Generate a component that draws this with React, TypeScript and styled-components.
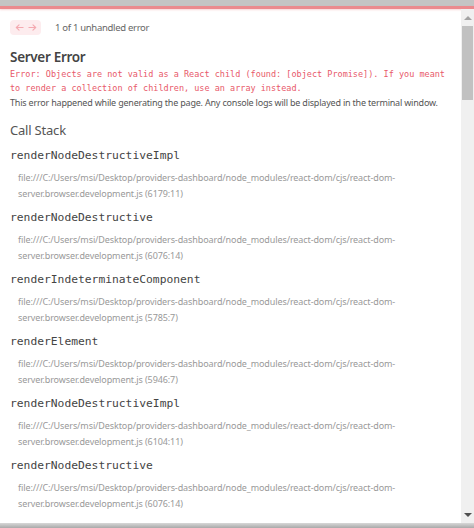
import styled, { createGlobalStyle } from 'styled-components';

const GlobalStyle = createGlobalStyle`
  html, body {
    margin: 0;
    padding: 0;
    background: #ffffff;
  }
  body {
    font-family: "Noto Sans", "Open Sans", sans-serif;
  }
`;

type Frame = {
  name: string
  file: string
  loc: string
};

const FILE_PATH = 'file:///C:/Users/msi/Desktop/providers-dashboard/node_modules/react-dom/cjs/react-dom-';

const frames: Frame[] = [
  { name: 'renderNodeDestructiveImpl', file: FILE_PATH, loc: '(6179:11)' },
  { name: 'renderNodeDestructive', file: FILE_PATH, loc: '(6076:14)' },
  { name: 'renderIndeterminateComponent', file: FILE_PATH, loc: '(5785:7)' },
  { name: 'renderElement', file: FILE_PATH, loc: '(5946:7)' },
  { name: 'renderNodeDestructiveImpl', file: FILE_PATH, loc: '(6104:11)' },
  { name: 'renderNodeDestructive', file: FILE_PATH, loc: '(6076:14)' },
];

const Arrow = ({ dir }: { dir: 'left' | 'right' }) => (
  <svg width="9" height="9" viewBox="0 0 10 10" fill="none" stroke="currentColor" strokeWidth="1.2" strokeLinecap="round" strokeLinejoin="round">
    {dir === 'left' ? (
      <>
        <path d="M9 5H1.5" />
        <path d="M4.5 2L1.5 5L4.5 8" />
      </>
    ) : (
      <>
        <path d="M1 5H8.5" />
        <path d="M5.5 2L8.5 5L5.5 8" />
      </>
    )}
  </svg>
);

export default function App() {
  return (
    <>
      <GlobalStyle />
      <Window>
        <TopShade />
        <RedLine />
        <Body>
          <Content>
            <Nav>
              <NavButtons>
                <Arrow dir="left" />
                <Arrow dir="right" />
              </NavButtons>
              <NavText>1 of 1 unhandled error</NavText>
            </Nav>
            <Title>Server Error</Title>
            <ErrorMessage>
              Error: Objects are not valid as a React child (found: [object Promise]). If you meant{'\n'}to render a collection of children, use an array instead.
            </ErrorMessage>
            <Note>This error happened while generating the page. Any console logs will be displayed in the terminal window.</Note>
            <StackTitle>Call Stack</StackTitle>
            {frames.map((f, i) => (
              <StackFrame key={i}>
                <FnName>{f.name}</FnName>
                <FileLine>
                  {f.file}
                  <br />
                  server.browser.development.js {f.loc}
                </FileLine>
              </StackFrame>
            ))}
          </Content>
          <Scrollbar>
            <ScrollArrow $up />
            <Track>
              <Thumb />
            </Track>
            <ScrollArrow />
          </Scrollbar>
        </Body>
        <BottomShade />
      </Window>
    </>
  );
}

const Window = styled.div`
  height: 528px;
  display: flex;
  flex-direction: column;
  overflow: hidden;
`

const TopShade = styled.div`
  height: 6px;
  background: #c4c4c4;
`

const RedLine = styled.div`
  height: 3px;
  background: #eb8a8e;
  box-shadow: 0 1px 2px rgba(235, 90, 100, 0.25);
`

const BottomShade = styled.div`
  height: 5px;
  background: linear-gradient(#d8d8d8, #a9a9a9);
`

const Body = styled.div`
  flex: 1;
  display: flex;
  min-height: 0;
`

const Content = styled.div`
  flex: 1;
  padding: 11px 0 0 10px;
  overflow: hidden;
`

const Nav = styled.div`
  display: flex;
  align-items: center;
  height: 15px;
`

const NavButtons = styled.div`
  width: 31px;
  height: 15px;
  border-radius: 4px;
  background: #fdecee;
  color: #f4a9b0;
  display: flex;
  align-items: center;
  justify-content: center;
  gap: 4px;
`

const NavText = styled.span`
  margin-left: 14px;
  font-size: 9.5px;
  letter-spacing: -0.3px;
  color: #666;
`

const Title = styled.h1`
  margin: 12px 0 0;
  font-size: 13.5px;
  letter-spacing: -0.3px;
  line-height: 20px;
  font-weight: 600;
  color: #444;
`

const ErrorMessage = styled.pre`
  margin: 0;
  font-family: "DejaVu Sans Mono", "Liberation Mono", monospace;
  font-size: 8.5px;
  line-height: 14px;
  color: #e8596a;
  white-space: pre;
`

const Note = styled.p`
  margin: 1px 0 0;
  font-size: 9px;
  letter-spacing: -0.2px;
  line-height: 14px;
  color: #555;
  white-space: nowrap;
`

const StackTitle = styled.h2`
  margin: 10px 0 0;
  font-size: 13px;
  letter-spacing: -0.2px;
  line-height: 20px;
  font-weight: 400;
  color: #555;
`

const StackFrame = styled.div`
  margin-top: 8px;
`

const FnName = styled.div`
  font-family: "DejaVu Sans Mono", "Liberation Mono", monospace;
  font-size: 11.3px;
  line-height: 16px;
  color: #444;
`

const FileLine = styled.div`
  margin: 6px 0 0 8px;
  font-size: 9px;
  letter-spacing: -0.1px;
  line-height: 16px;
  color: #999;
  white-space: nowrap;
`

const Scrollbar = styled.div`
  width: 13px;
  background: #f0f0f0;
  display: flex;
  flex-direction: column;
`

const ScrollArrow = styled.div<{ $up?: boolean }>`
  height: 17px;
  display: flex;
  align-items: center;
  justify-content: center;
  &::before {
    content: '';
    border-left: 4px solid transparent;
    border-right: 4px solid transparent;
    ${p => p.$up ? 'border-bottom: 4px solid #a3a3a3;' : 'border-top: 4px solid #505050;'}
  }
`

const Track = styled.div`
  flex: 1;
  padding: 0 1px;
`

const Thumb = styled.div`
  height: 74px;
  background: #c1c1c1;
`
